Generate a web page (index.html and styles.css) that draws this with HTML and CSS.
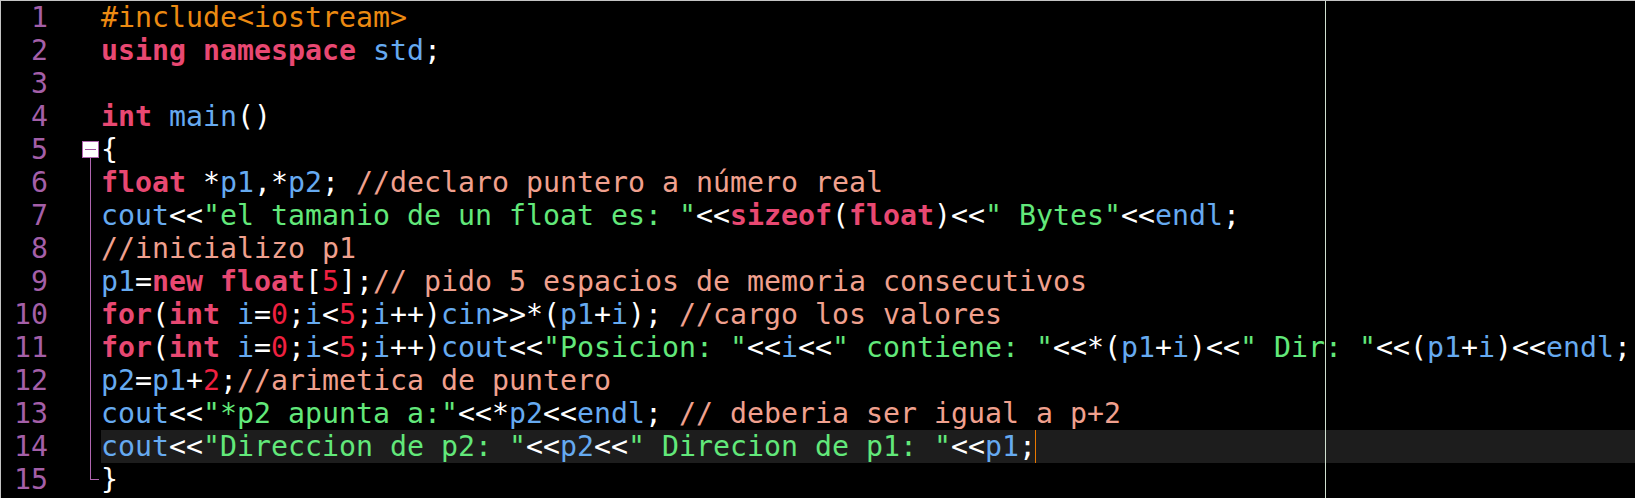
FILE: index.html
```html
<!DOCTYPE html>
<html>
<head>
<meta charset="utf-8">
<link rel="stylesheet" href="styles.css">
</head>
<body>
<div class="editor">
  <div class="edge-marker"></div>
  <div class="row"><span class="num">1</span><span class="fold"></span><span class="code"><span class="pp">#include&lt;iostream&gt;</span></span></div>
  <div class="row"><span class="num">2</span><span class="fold"></span><span class="code"><span class="kw">using</span> <span class="kw">namespace</span> <span class="id">std</span>;</span></div>
  <div class="row"><span class="num">3</span><span class="fold"></span><span class="code"></span></div>
  <div class="row"><span class="num">4</span><span class="fold"></span><span class="code"><span class="kw">int</span> <span class="id">main</span>()</span></div>
  <div class="row"><span class="num">5</span><span class="fold"><span class="fold-box"></span><span class="fold-stem"></span></span><span class="code">{</span></div>
  <div class="row"><span class="num">6</span><span class="fold"><span class="fold-line"></span></span><span class="code"><span class="kw">float</span> *<span class="id">p1</span>,*<span class="id">p2</span>; <span class="cm">//declaro puntero a número real</span></span></div>
  <div class="row"><span class="num">7</span><span class="fold"><span class="fold-line"></span></span><span class="code"><span class="id">cout</span>&lt;&lt;<span class="st">"el tamanio de un float es: "</span>&lt;&lt;<span class="kw">sizeof</span>(<span class="kw">float</span>)&lt;&lt;<span class="st">" Bytes"</span>&lt;&lt;<span class="id">endl</span>;</span></div>
  <div class="row"><span class="num">8</span><span class="fold"><span class="fold-line"></span></span><span class="code"><span class="cm">//inicializo p1</span></span></div>
  <div class="row"><span class="num">9</span><span class="fold"><span class="fold-line"></span></span><span class="code"><span class="id">p1</span>=<span class="kw">new</span> <span class="kw">float</span>[<span class="nb">5</span>];<span class="cm">// pido 5 espacios de memoria consecutivos</span></span></div>
  <div class="row"><span class="num">10</span><span class="fold"><span class="fold-line"></span></span><span class="code"><span class="kw">for</span>(<span class="kw">int</span> <span class="id">i</span>=<span class="nb">0</span>;<span class="id">i</span>&lt;<span class="nb">5</span>;<span class="id">i</span>++)<span class="id">cin</span>&gt;&gt;*(<span class="id">p1</span>+<span class="id">i</span>); <span class="cm">//cargo los valores</span></span></div>
  <div class="row"><span class="num">11</span><span class="fold"><span class="fold-line"></span></span><span class="code"><span class="kw">for</span>(<span class="kw">int</span> <span class="id">i</span>=<span class="nb">0</span>;<span class="id">i</span>&lt;<span class="nb">5</span>;<span class="id">i</span>++)<span class="id">cout</span>&lt;&lt;<span class="st">"Posicion: "</span>&lt;&lt;<span class="id">i</span>&lt;&lt;<span class="st">" contiene: "</span>&lt;&lt;*(<span class="id">p1</span>+<span class="id">i</span>)&lt;&lt;<span class="st">" Dir: "</span>&lt;&lt;(<span class="id">p1</span>+<span class="id">i</span>)&lt;&lt;<span class="id">endl</span>;</span></div>
  <div class="row"><span class="num">12</span><span class="fold"><span class="fold-line"></span></span><span class="code"><span class="id">p2</span>=<span class="id">p1</span>+<span class="nb">2</span>;<span class="cm">//arimetica de puntero</span></span></div>
  <div class="row"><span class="num">13</span><span class="fold"><span class="fold-line"></span></span><span class="code"><span class="id">cout</span>&lt;&lt;<span class="st">"*p2 apunta a:"</span>&lt;&lt;*<span class="id">p2</span>&lt;&lt;<span class="id">endl</span>; <span class="cm">// deberia ser igual a p+2</span></span></div>
  <div class="row"><span class="num">14</span><span class="fold"><span class="fold-line"></span></span><span class="code current"><span class="id">cout</span>&lt;&lt;<span class="st">"Direccion de p2: "</span>&lt;&lt;<span class="id">p2</span>&lt;&lt;<span class="st">" Direcion de p1: "</span>&lt;&lt;<span class="id">p1</span>;<span class="caret"></span></span></div>
  <div class="row"><span class="num">15</span><span class="fold"><span class="fold-end"></span></span><span class="code">}</span></div>
</div>
</body>
</html>
```
FILE: styles.css
```css
html, body {
  margin: 0;
  padding: 0;
  background: #000;
  overflow: hidden;
}

.editor {
  position: relative;
  width: 1634px;
  height: 497px;
  border-top: 1px solid #c4c4c4;
  border-left: 1px solid #c4c4c4;
  background: #000;
  font-family: "DejaVu Sans Mono", monospace;
  font-size: 28.24px;
  color: #ffffff;
}

.edge-marker {
  position: absolute;
  left: 1324px;
  top: 0;
  bottom: 0;
  width: 1px;
  background: #cfe0cf;
  z-index: 2;
}

.row {
  display: flex;
  height: 33px;
  line-height: 33px;
}

.num {
  width: 47px;
  flex: none;
  text-align: right;
  color: #a45fa8;
}

.fold {
  position: relative;
  width: 53px;
  flex: none;
}

.code {
  flex: 1;
  white-space: pre;
  position: relative;
}

.code.current {
  background: #1d1d1d;
}

.caret {
  display: inline-block;
  width: 1px;
  height: 33px;
  background: #e87800;
  vertical-align: top;
  margin-left: -1px;
}

.fold-box {
  position: absolute;
  left: 34px;
  top: 8px;
  width: 15px;
  height: 15px;
  border: 1px solid #b066b0;
  background: #ffffff;
}

.fold-box::after {
  content: "";
  position: absolute;
  left: 2px;
  right: 2px;
  top: 7px;
  height: 1px;
  background: #a050a0;
}

.fold-stem {
  position: absolute;
  left: 42px;
  top: 25px;
  bottom: 0;
  width: 1px;
  background: #b066b0;
}

.fold-line {
  position: absolute;
  left: 42px;
  top: 0;
  bottom: 0;
  width: 1px;
  background: #b066b0;
}

.fold-end {
  position: absolute;
  left: 42px;
  top: 0;
  width: 8px;
  height: 16px;
  border-left: 1px solid #b066b0;
  border-bottom: 1px solid #b066b0;
}

.pp { color: #ec8a12; }
.kw { color: #e84872; font-weight: bold; }
.id { color: #66aaf0; }
.st { color: #62e87a; }
.cm { color: #f0a08e; }
.nb { color: #f02040; }
```
